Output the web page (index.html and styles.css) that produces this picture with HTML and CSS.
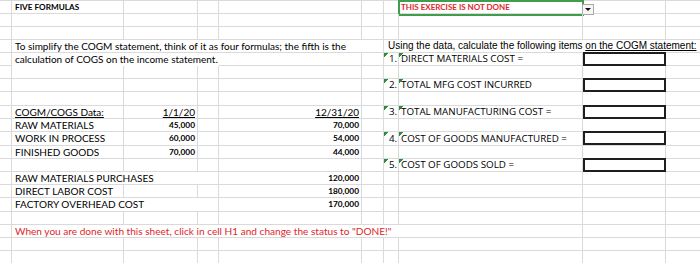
FILE: index.html
```html
<!DOCTYPE html>
<html lang="en">
<head>
<meta charset="utf-8">
<title>Five Formulas</title>
<link rel="stylesheet" href="styles.css">
</head>
<body>
<div class="sheet">
  <div class="row r13">
    <div class="cell b title">FIVE FORMULAS</div>
    <div class="cell h status">THIS EXERCISE IS NOT DONE</div>
    <div class="cell i"><span class="dropdown"><span class="arrow"></span></span></div>
  </div>
  <div class="row r13"></div>
  <div class="row r13"></div>
  <div class="row r13">
    <div class="cell span-be fill">To simplify the COGM statement, think of it as four formulas; the fifth is the</div>
    <div class="cell span-gj fill intro">Using the data, calculate the following items <u>on the COGM statement:</u></div>
  </div>
  <div class="row r13">
    <div class="cell span-bd fill">calculation of COGS on the income statement.</div>
    <div class="cell g item mark">1.</div>
    <div class="cell h item mark">DIRECT MATERIALS COST =</div>
    <div class="cell i"><span class="answer"></span></div>
  </div>
  <div class="row r13"></div>
  <div class="row r13">
    <div class="cell g item mark">2.</div>
    <div class="cell h item mark">TOTAL MFG COST INCURRED</div>
    <div class="cell i"><span class="answer"></span></div>
  </div>
  <div class="row r14"></div>
  <div class="row r13">
    <div class="cell b"><u>COGM/COGS Data:</u></div>
    <div class="cell c right"><u>1/1/20</u></div>
    <div class="cell e right"><u>12/31/20</u></div>
    <div class="cell g item mark">3.</div>
    <div class="cell h item mark">TOTAL MANUFACTURING COST =</div>
    <div class="cell i"><span class="answer"></span></div>
  </div>
  <div class="row r13">
    <div class="cell b">RAW MATERIALS</div>
    <div class="cell c num">45,000</div>
    <div class="cell e num">70,000</div>
  </div>
  <div class="row r14">
    <div class="cell b">WORK IN PROCESS</div>
    <div class="cell c num">60,000</div>
    <div class="cell e num">54,000</div>
    <div class="cell g item mark">4.</div>
    <div class="cell h item mark">COST OF GOODS MANUFACTURED =</div>
    <div class="cell i"><span class="answer"></span></div>
  </div>
  <div class="row r13">
    <div class="cell b">FINISHED GOODS</div>
    <div class="cell c num">70,000</div>
    <div class="cell e num">44,000</div>
  </div>
  <div class="row r13">
    <div class="cell g item mark">5.</div>
    <div class="cell h item mark">COST OF GOODS SOLD =</div>
    <div class="cell i"><span class="answer"></span></div>
  </div>
  <div class="row r13">
    <div class="cell span-bc fill">RAW MATERIALS PURCHASES</div>
    <div class="cell e num">120,000</div>
  </div>
  <div class="row r13">
    <div class="cell b">DIRECT LABOR COST</div>
    <div class="cell e num">180,000</div>
  </div>
  <div class="row r14">
    <div class="cell span-bc fill">FACTORY OVERHEAD COST</div>
    <div class="cell e num">170,000</div>
  </div>
  <div class="row r13"></div>
  <div class="row r13">
    <div class="cell span-bg fill note">When you are done with this sheet, click in cell H1 and change the status to "DONE!"</div>
  </div>
  <div class="row r13"></div>
  <div class="row r13"></div>
</div>
</body>
</html>
```

FILE: styles.css
```css
html, body {
  margin: 0;
  padding: 0;
  background: #ffffff;
}

body {
  font-family: Lato, "Liberation Sans", sans-serif;
  font-size: 10px;
  color: #000000;
  overflow: hidden;
}

.sheet {
  width: 700px;
  display: flex;
  flex-direction: column;
  border-top: 1px solid #dadada;
}

.row {
  --grid: #dadada;
  display: grid;
  grid-template-columns: 12px 112px 74px 21px 143px 22px 15px 184px 83px 34px;
  box-sizing: border-box;
  border-bottom: 1px solid var(--grid);
  background:
    linear-gradient(var(--grid), var(--grid)) 11px 0 / 1px 100% no-repeat,
    linear-gradient(var(--grid), var(--grid)) 123px 0 / 1px 100% no-repeat,
    linear-gradient(var(--grid), var(--grid)) 197px 0 / 1px 100% no-repeat,
    linear-gradient(var(--grid), var(--grid)) 218px 0 / 1px 100% no-repeat,
    linear-gradient(var(--grid), var(--grid)) 361px 0 / 1px 100% no-repeat,
    linear-gradient(var(--grid), var(--grid)) 383px 0 / 1px 100% no-repeat,
    linear-gradient(var(--grid), var(--grid)) 398px 0 / 1px 100% no-repeat,
    linear-gradient(var(--grid), var(--grid)) 582px 0 / 1px 100% no-repeat,
    linear-gradient(var(--grid), var(--grid)) 665px 0 / 1px 100% no-repeat;
}

.r13 { height: 13px; line-height: 12px; }
.r14 { height: 14px; line-height: 13px; }

.cell {
  grid-row: 1;
  padding: 0 3px;
  white-space: nowrap;
  min-width: 0;
}

.b { grid-column: 2; }
.c { grid-column: 3; }
.e { grid-column: 5; }
.g { grid-column: 7; }
.h { grid-column: 8; }
.i { grid-column: 9; }

.span-bc { grid-column: 2 / 4; }
.span-bd { grid-column: 2 / 5; }
.span-be { grid-column: 2 / 6; }
.span-bg { grid-column: 2 / 8; }
.span-gj { grid-column: 7 / 11; }

.fill { background: #ffffff; }

.title {
  font-weight: 700;
  font-size: 8.2px;
}

.status {
  color: #e0262b;
  font-weight: 700;
  font-size: 8px;
  padding-left: 2px;
  outline: 2px solid #3f9d4c;
  outline-offset: -1px;
}

.dropdown {
  display: flex;
  align-items: center;
  justify-content: center;
  width: 10px;
  height: 9px;
  margin: 3px 0 0 -1px;
  border: 1px solid #a9a9a9;
  background: #f6f6f6;
}

.arrow {
  width: 0;
  height: 0;
  border-left: 3px solid transparent;
  border-right: 3px solid transparent;
  border-top: 3px solid #111111;
}

.i {
  padding: 0;
}

.answer {
  display: block;
  box-sizing: border-box;
  height: 14px;
  margin-top: -1px;
  border: 2px solid #1e1e1e;
}

.intro {
  font-family: "Liberation Sans", Arial, sans-serif;
  font-size: 10px;
  padding-left: 4px;
}

.intro u {
  text-decoration-thickness: 1px;
  text-underline-offset: 1px;
}

.item {
  font-family: "Open Sans", sans-serif;
  font-size: 9.8px;
  padding-left: 5px;
  padding-right: 0;
}

.h.item {
  padding-left: 2px;
}

.mark {
  background: linear-gradient(135deg, #2e8b3e 0 3px, transparent 3px) no-repeat;
}

.right {
  text-align: right;
}

.num {
  text-align: right;
  font-weight: 700;
  font-size: 8.3px;
}

.note {
  color: #e0262b;
  font-size: 10.1px;
}
```
